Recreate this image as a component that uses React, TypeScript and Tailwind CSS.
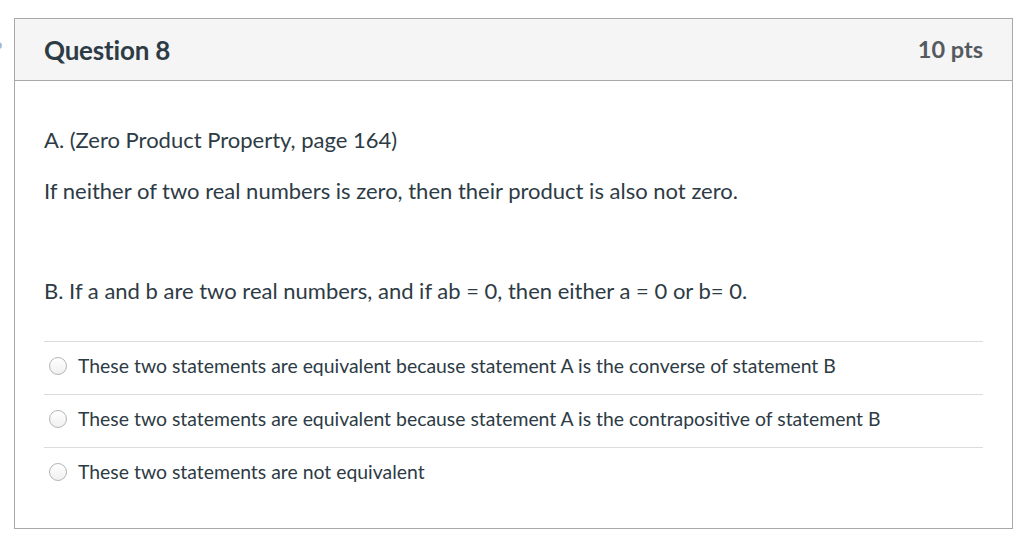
import React from "react";

const answers = [
  "These two statements are equivalent because statement A is the converse of statement B",
  "These two statements are equivalent because statement A is the contrapositive of statement B",
  "These two statements are not equivalent",
];

function Radio() {
  return (
    <span className="ml-[5px] mr-[11px] inline-block h-[18px] w-[18px] shrink-0 rounded-full border border-[#b5b5b5] bg-gradient-to-b from-[#ffffff] to-[#f0f0f0]" />
  );
}

export default function App() {
  return (
    <div className="relative min-h-[554px] w-[1024px] bg-white pl-[14px] pt-[18px] font-['Lato','Liberation_Sans',sans-serif] text-[#2d3b45]">
      <span className="absolute left-[-5px] top-[42px] h-[7px] w-[7px] rounded-full bg-[#9fbbd9]" />
      <div className="w-[999px] border border-[#a8a8a8]">
        <div className="flex h-[62px] items-center justify-between border-b border-[#a8a8a8] bg-[#f5f5f5] px-[29px]">
          <h2 className="text-[26px] font-bold leading-none tracking-[-0.2px]">Question 8</h2>
          <span className="text-[23.5px] font-bold leading-none text-[#555a5e]">10 pts</span>
        </div>
        <div className="px-[29px] pb-[28px] pt-[44px]">
          <p className="text-[22px] leading-[30px]">A. (Zero Product Property, page 164)</p>
          <p className="mt-[21px] text-[22px] leading-[30px]">
            If neither of two real numbers is zero, then their product is also not zero.
          </p>
          <p className="mt-[70px] text-[22px] leading-[30px]">
            B. If a and b are two real numbers, and if ab = 0, then either a = 0 or b= 0.
          </p>
          <div className="mt-[35px]">
            {answers.map((a) => (
              <div
                key={a}
                className="flex h-[53px] items-center border-t border-[#dcdcdc] pb-[4px] text-[19.4px]"
              >
                <Radio />
                <span>{a}</span>
              </div>
            ))}
          </div>
        </div>
      </div>
    </div>
  );
}
